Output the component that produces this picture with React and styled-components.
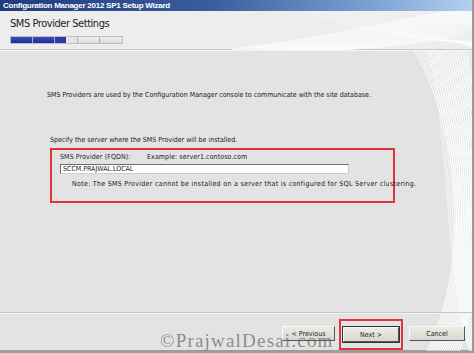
import React from 'react';
import styled, { createGlobalStyle } from 'styled-components';

const Global = createGlobalStyle`
  html, body { margin: 0; padding: 0; background: #e4e4e4; }
  body { font-family: Tahoma, "DejaVu Sans", "Liberation Sans", sans-serif; }
`;

const Window = styled.div`
  position: relative;
  width: 474px;
  height: 353px;
  overflow: hidden;
  display: flex;
  flex-direction: column;
  background: #e3e3e3;
  border-right: 2px solid #9a9a9a;
  box-sizing: border-box;
`;

const TitleBar = styled.div`
  height: 11px;
  flex: none;
  background: linear-gradient(90deg, #1f3c7c 0%, #3b5d9c 45%, #7ea4d6 80%, #b4d0f0 100%);
  color: #fff;
  font: bold 8px "Liberation Sans", Arial, sans-serif;
  line-height: 11px;
  padding-left: 3px;
  letter-spacing: -0.25px;
  white-space: nowrap;
`;

const Header = styled.div`
  position: relative;
  height: 39px;
  flex: none;
  background: #ededed;
  padding: 6px 0 0 10px;
  box-sizing: border-box;
  border-bottom: 1px solid #c9c9c9;
  box-shadow: 0 1px 0 #f6f6f6;
`;

const Heading = styled.div`
  position: relative;
  font: 11px "DejaVu Sans Condensed", "DejaVu Sans", sans-serif;
  color: #222;
  line-height: 14px;
  letter-spacing: -0.45px;
`;

const Progress = styled.div`
  position: relative;
  margin-top: 5px;
  width: 113px;
  height: 8px;
  display: grid;
  grid-template-columns: repeat(5, 1fr);
  background: #e2e2e2;
  border: 1px solid #bdbdbd;
  box-sizing: border-box;
`;

const Segment = styled.div`
  border-right: 1px solid #b0b0b0;
  background: ${p =>
    p.$fill === 1
      ? 'linear-gradient(#3a4fb8, #1d2c9a)'
      : p.$fill === 0.5
      ? 'linear-gradient(90deg, #2a3cab 0 52%, #e6e6e6 52%)'
      : 'linear-gradient(#efefef, #dcdcdc)'};
  &:last-child { border-right: none; }
`;

const Body = styled.div`
  position: relative;
  flex: 1;
  padding: 41px 0 0 47px;
  box-sizing: border-box;
  font: 7px "DejaVu Sans Condensed", "DejaVu Sans", sans-serif;
  color: #1a1a1a;
`;

const Para = styled.p`
  position: relative;
  margin: 0;
  line-height: 9px;
  margin-left: ${p => p.$indent || 0}px;
  margin-top: ${p => p.$top || 0}px;
  white-space: nowrap;
`;

const RedBox = styled.div`
  position: relative;
  margin: 3px 0 0 3px;
  width: 345px;
  height: 55px;
  border: 2px solid #e0353d;
  box-sizing: border-box;
  padding: 3px 0 0 8px;
`;

const LabelRow = styled.div`
  display: flex;
  line-height: 9px;
  letter-spacing: 0.1px;
`;

const Label = styled.span`
  width: 87px;
`;

const Input = styled.div`
  margin-top: 2px;
  width: 289px;
  height: 10px;
  background: #fff;
  border: 1px solid #6f6f6f;
  border-bottom-color: #ccc;
  border-right-color: #ccc;
  box-sizing: border-box;
  line-height: 8px;
  padding-left: 2px;
`;

const Note = styled.div`
  margin: 6px 0 0 12px;
  line-height: 9px;
  white-space: nowrap;
  letter-spacing: 0.3px;
`;

const Footer = styled.div`
  position: relative;
  height: 38px;
  flex: none;
  border-top: 1px solid #c6c6c6;
  box-shadow: inset 0 1px 0 #f4f4f4;
  display: flex;
  justify-content: flex-end;
  align-items: flex-start;
  padding: 13px 7px 0 0;
  box-sizing: border-box;
  gap: 9px;
`;

const ButtonWrap = styled.div`
  padding: ${p => (p.$marked ? '6px 2px' : '0')};
  margin: ${p => (p.$marked ? '-7px -3px 0 -5px' : '0')};
  border: ${p => (p.$marked ? '2px solid #e0353d' : 'none')};
`;

const Button = styled.div`
  width: ${p => p.$w || 56}px;
  height: 15px;
  box-sizing: border-box;
  background: linear-gradient(#ecebe6, #d9d7cf);
  border: 1px solid #f8f8f8;
  border-right-color: #555;
  border-bottom-color: #555;
  outline: ${p => (p.$default ? '1px solid #333' : 'none')};
  font: 7px "DejaVu Sans Condensed", "DejaVu Sans", sans-serif;
  color: #222;
  display: flex;
  align-items: center;
  justify-content: center;
`;

const BottomStrip = styled.div`
  height: 3px;
  flex: none;
  background: #9c9c9c;
`;

const Watermark = styled.div`
  position: absolute;
  left: 160px;
  top: 330px;
  font: 19px "Liberation Serif", "Times New Roman", serif;
  color: rgba(110, 110, 110, 0.75);
  letter-spacing: 1.2px;
  pointer-events: none;
`;

const Waves = styled.svg`
  position: absolute;
  right: 0;
  top: ${p => p.$top}px;
  pointer-events: none;
`;

const HeaderWaves = () => {
  const lines = [];
  for (let i = 0; i < 22; i++) {
    const o = i * 9;
    lines.push(
      <path
        key={'a' + i}
        d={`M ${-20 + o * 0.6} 40 C ${80 + o} 30, ${160 + o * 0.4} 10, 240 ${-5 + i}`}
        stroke="#fff"
        strokeWidth="0.8"
        fill="none"
        opacity="0.8"
      />
    );
    lines.push(
      <path
        key={'b' + i}
        d={`M ${60 + o} -2 C ${120 + o} 15, ${170 + o * 0.5} 30, 240 ${30 + i * 0.5}`}
        stroke="#fff"
        strokeWidth="0.7"
        fill="none"
        opacity="0.6"
      />
    );
  }
  return (
    <Waves width="240" height="39" $top={0}>
      {lines}
    </Waves>
  );
};

const SideWaves = () => {
  const lines = [];
  for (let i = 0; i < 18; i++) {
    lines.push(
      <path
        key={'c' + i}
        d={`M ${10 + i * 3} -5 C ${60 + i * 2} 80, ${70 + i} 220, ${20 + i * 2} 310`}
        stroke="#fff"
        strokeWidth="1"
        fill="none"
        opacity="0.9"
      />
    );
    lines.push(
      <path
        key={'d' + i}
        d={`M ${25 + i * 2.5} -5 C ${50 + i * 2} 90, ${40 + i * 2} 210, ${70 + i} 310`}
        stroke="#fff"
        strokeWidth="0.8"
        fill="none"
        opacity="0.8"
      />
    );
  }
  return (
    <Waves width="70" height="300" $top={51} viewBox="0 0 70 300">
      {lines}
    </Waves>
  );
};

export default function App() {
  return (
    <Window>
      <Global />
      <SideWaves />
      <TitleBar>Configuration Manager 2012 SP1 Setup Wizard</TitleBar>
      <Header>
        <HeaderWaves />
        <Heading>SMS Provider Settings</Heading>
        <Progress>
          <Segment $fill={1} />
          <Segment $fill={1} />
          <Segment $fill={0.5} />
          <Segment />
          <Segment />
        </Progress>
      </Header>
      <Body>
        <Para>
          SMS Providers are used by the Configuration Manager console to communicate with the site database.
        </Para>
        <Para $indent={3} $top={36}>
          Specify the server where the SMS Provider will be installed.
        </Para>
        <RedBox>
          <LabelRow>
            <Label>SMS Provider (FQDN):</Label>
            <span>Example: server1.contoso.com</span>
          </LabelRow>
          <Input>SCCM.PRAJWAL.LOCAL</Input>
          <Note>
            Note: The SMS Provider cannot be installed on a server that is configured for SQL Server clustering.
          </Note>
        </RedBox>
      </Body>
      <Footer>
        <Button $w={53}>&lt; Previous</Button>
        <ButtonWrap $marked>
          <Button $default>Next &gt;</Button>
        </ButtonWrap>
        <Button>Cancel</Button>
      </Footer>
      <BottomStrip />
      <Watermark>©PrajwalDesai.com</Watermark>
    </Window>
  );
}
